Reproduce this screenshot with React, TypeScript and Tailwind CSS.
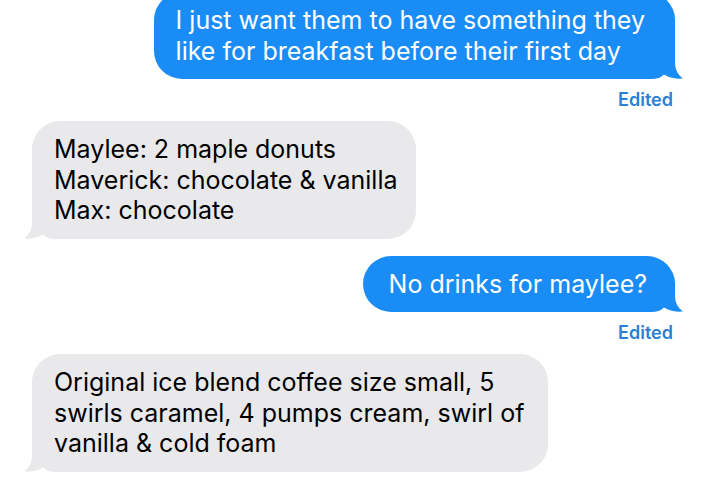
function Tail({ side, color }: { side: 'left' | 'right'; color: string }) {
  return (
    <svg
      width="40"
      height="30"
      viewBox="0 0 40 30"
      className={
        side === 'right'
          ? 'absolute bottom-0 right-[-8px]'
          : 'absolute bottom-0 left-[-8px] -scale-x-100'
      }
    >
      <path
        d="M0 30 L0 0 L32 0 L32 13 C32 21 35 26 40 29.5 C35 30 27 29.5 21 25.5 C18 28.5 14 30 8 30 Z"
        fill={color}
      />
    </svg>
  );
}

function Bubble({
  lines,
  outgoing = false,
  pad,
}: {
  lines: string[];
  outgoing?: boolean;
  pad: string;
}) {
  const color = outgoing ? '#1a8cf6' : '#e9e9eb';
  return (
    <div
      className={`relative rounded-[28px] py-[13px] text-[25px] leading-[30.5px] ${pad} ${
        outgoing ? 'bg-[#1a8cf6] text-white' : 'bg-[#e9e9eb] text-black'
      }`}
    >
      {lines.map((line) => (
        <p key={line} className="relative z-10 whitespace-nowrap">
          {line}
        </p>
      ))}
      <Tail side={outgoing ? 'right' : 'left'} color={color} />
    </div>
  );
}

function Edited() {
  return (
    <p className="mr-[35px] mt-[10px] mb-[10px] self-end text-[18px] font-semibold leading-[22px] text-[#2b7fd4]">
      Edited
    </p>
  );
}

export default function App() {
  return (
    <div className="flex h-[478px] w-[708px] flex-col overflow-hidden bg-white font-['Inter',sans-serif]">
      <div className="mr-[33px] mt-[-8px] self-end">
        <Bubble
          outgoing
          pad="pl-[22px] pr-[30px]"
          lines={[
            'I just want them to have something they',
            'like for breakfast before their first day',
          ]}
        />
      </div>
      <Edited />
      <div className="ml-[32px] self-start">
        <Bubble
          pad="pl-[22px] pr-[18px]"
          lines={[
            'Maylee: 2 maple donuts',
            'Maverick: chocolate & vanilla',
            'Max: chocolate',
          ]}
        />
      </div>
      <div className="mr-[33px] mt-[17px] self-end">
        <Bubble
          outgoing
          pad="pl-[26px] pr-[28px]"
          lines={['No drinks for maylee?']}
        />
      </div>
      <Edited />
      <div className="ml-[32px] self-start">
        <Bubble
          pad="pl-[22px] pr-[24px]"
          lines={[
            'Original ice blend coffee size small, 5',
            'swirls caramel, 4 pumps cream, swirl of',
            'vanilla & cold foam',
          ]}
        />
      </div>
    </div>
  );
}
